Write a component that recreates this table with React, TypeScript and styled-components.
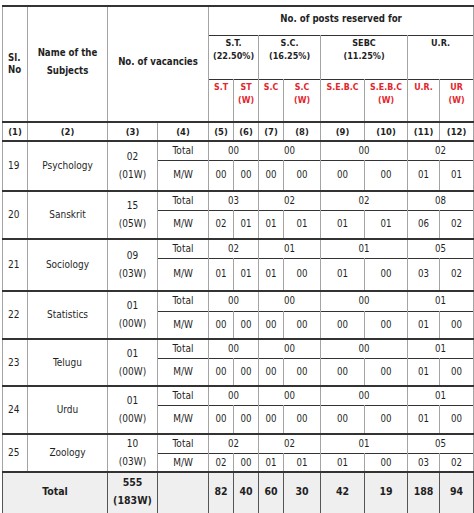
import React from 'react';
import styled, { createGlobalStyle } from 'styled-components';

const Global = createGlobalStyle`
  html, body { margin: 0; padding: 0; background: #ffffff; }
  body {
    font-family: "DejaVu Sans Condensed", "DejaVu Sans", "Liberation Sans", sans-serif;
    font-stretch: semi-condensed;
    color: #1f1f1f;
  }
`;

const DARK = '#333333';
const GRAY = '#a4a4a4';
const RED = '#e3262d';

type Top = 'thick' | 'thin' | 'none';

const topBorder = (t?: Top) =>
  t === 'thick' ? `2px solid ${DARK}` : t === 'none' ? 'none' : `1px solid ${DARK}`;

const Page = styled.div`
  box-sizing: border-box;
  width: 474px;
  height: 513px;
  overflow: hidden;
  padding: 5px 0 0 2px;
`;

const Table = styled.table`
  border-collapse: collapse;
  table-layout: fixed;
  width: 471px;
`;

const Col = styled.col<{ $w: number }>`
  width: ${(p) => p.$w}px;
`;

const Row = styled.tr<{ $h: number }>`
  height: ${(p) => p.$h}px;
`;

const BaseCell = styled.td<{ $top?: Top }>`
  padding: 0;
  border-left: 1px solid ${GRAY};
  border-right: 1px solid ${GRAY};
  border-top: ${(p) => topBorder(p.$top)};
  border-bottom: none;
  text-align: center;
  vertical-align: middle;
  white-space: nowrap;
  overflow: hidden;
`;

const HeadCell = styled(BaseCell).attrs({ as: 'th' })`
  font-weight: bold;
  font-size: 9.6px;
  line-height: 12px;
`;

const SlHead = styled(HeadCell)`
  text-align: left;
  padding-left: 5px;
`;

const NameHead = styled(HeadCell)`
  line-height: 18px;
  padding-bottom: 4px;
`;

const TitleHead = styled(HeadCell)`
  padding-bottom: 4px;
`;

const GroupHead = styled(HeadCell)`
  vertical-align: top;
  font-size: 9px;
  line-height: 13px;
  padding-top: 1px;
`;

const RedHead = styled(HeadCell)`
  vertical-align: top;
  color: ${RED};
  font-size: 8.8px;
  line-height: 13px;
  padding-top: 1px;
`;

const IndexHead = styled(HeadCell)`
  font-size: 9.4px;
`;

const DataCell = styled(BaseCell)`
  font-size: 10px;
  line-height: 12px;
`;

const SlCell = styled(DataCell)`
  text-align: left;
  padding-left: 5px;
`;

const VacCell = styled(DataCell)`
  line-height: 18px;
`;

const ValueCell = styled(DataCell)`
  font-size: 9.6px;
`;

const TotalCell = styled(BaseCell)`
  background: #efefef;
  font-weight: bold;
  font-size: 10.5px;
  line-height: 18px;
  vertical-align: top;
  padding-top: 9px;
  border-left-color: #555555;
  border-right-color: #555555;
`;

const TotalVacCell = styled(TotalCell)`
  padding-top: 0;
`;

interface Subject {
  sl: number;
  name: string;
  vac: string;
  women: string;
  totals: string[];
  mw: string[];
  h: [number, number];
}

const subjects: Subject[] = [
  { sl: 19, name: 'Psychology', vac: '02', women: '(01W)', totals: ['00', '00', '00', '02'], mw: ['00', '00', '00', '00', '00', '00', '01', '01'], h: [19, 31] },
  { sl: 20, name: 'Sanskrit', vac: '15', women: '(05W)', totals: ['03', '02', '02', '08'], mw: ['02', '01', '01', '01', '01', '01', '06', '02'], h: [19, 29] },
  { sl: 21, name: 'Sociology', vac: '09', women: '(03W)', totals: ['02', '01', '01', '05'], mw: ['01', '01', '01', '00', '01', '00', '03', '02'], h: [19, 33] },
  { sl: 22, name: 'Statistics', vac: '01', women: '(00W)', totals: ['00', '00', '00', '01'], mw: ['00', '00', '00', '00', '00', '00', '01', '00'], h: [20, 28] },
  { sl: 23, name: 'Telugu', vac: '01', women: '(00W)', totals: ['00', '00', '00', '01'], mw: ['00', '00', '00', '00', '00', '00', '01', '00'], h: [19, 28] },
  { sl: 24, name: 'Urdu', vac: '01', women: '(00W)', totals: ['00', '00', '00', '01'], mw: ['00', '00', '00', '00', '00', '00', '01', '00'], h: [19, 29] },
  { sl: 25, name: 'Zoology', vac: '10', women: '(03W)', totals: ['02', '02', '01', '05'], mw: ['02', '00', '01', '01', '01', '00', '03', '02'], h: [19, 18] },
];

const widths = [25, 80, 50, 51, 25, 25, 25, 37, 44, 43, 32, 34];

const groups = [
  ['S.T.', '(22.50%)'],
  ['S.C.', '(16.25%)'],
  ['SEBC', '(11.25%)'],
  ['U.R.'],
];

const redLabels = [
  ['S.T'],
  ['ST', '(W)'],
  ['S.C'],
  ['S.C', '(W)'],
  ['S.E.B.C'],
  ['S.E.B.C', '(W)'],
  ['U.R.'],
  ['UR', '(W)'],
];

const grandTotals = ['82', '40', '60', '30', '42', '19', '188', '94'];

const Lines: React.FC<{ lines: string[] }> = ({ lines }) => (
  <>
    {lines.map((l, i) => (
      <React.Fragment key={i}>
        {i > 0 && <br />}
        {l}
      </React.Fragment>
    ))}
  </>
);

export default function App() {
  return (
    <>
      <Global />
      <Page>
        <Table>
          <colgroup>
            {widths.map((w, i) => (
              <Col key={i} $w={w} />
            ))}
          </colgroup>
          <thead>
            <Row $h={29}>
              <SlHead rowSpan={3} $top="thick">
                Sl.
                <br />
                No
              </SlHead>
              <NameHead rowSpan={3} $top="thick">
                Name of the
                <br />
                Subjects
              </NameHead>
              <TitleHead rowSpan={3} colSpan={2} $top="thick">
                No. of vacancies
              </TitleHead>
              <TitleHead colSpan={8} $top="thick">
                No. of posts reserved for
              </TitleHead>
            </Row>
            <Row $h={44}>
              {groups.map((g, i) => (
                <GroupHead key={i} colSpan={2} $top="thin">
                  <Lines lines={g} />
                </GroupHead>
              ))}
            </Row>
            <Row $h={43}>
              {redLabels.map((l, i) => (
                <RedHead key={i} $top="thin">
                  <Lines lines={l} />
                </RedHead>
              ))}
            </Row>
            <Row $h={19}>
              {widths.map((_, i) => (
                <IndexHead key={i} $top="thick">
                  ({i + 1})
                </IndexHead>
              ))}
            </Row>
          </thead>
          <tbody>
            {subjects.map((s) => (
              <React.Fragment key={s.sl}>
                <Row $h={s.h[0]}>
                  <SlCell rowSpan={2} $top="thick">
                    {s.sl}
                  </SlCell>
                  <DataCell rowSpan={2} $top="thick">
                    {s.name}
                  </DataCell>
                  <VacCell rowSpan={2} $top="thick">
                    {s.vac}
                    <br />
                    {s.women}
                  </VacCell>
                  <DataCell $top="thick">Total</DataCell>
                  {s.totals.map((t, i) => (
                    <ValueCell key={i} colSpan={2} $top="thick">
                      {t}
                    </ValueCell>
                  ))}
                </Row>
                <Row $h={s.h[1]}>
                  <DataCell $top="thin">M/W</DataCell>
                  {s.mw.map((v, i) => (
                    <ValueCell key={i} $top="thin">
                      {v}
                    </ValueCell>
                  ))}
                </Row>
              </React.Fragment>
            ))}
            <Row $h={43}>
              <TotalCell colSpan={2} $top="thick">
                Total
              </TotalCell>
              <TotalVacCell $top="thick">
                555
                <br />
                (183W)
              </TotalVacCell>
              <TotalCell $top="thick" />
              {grandTotals.map((t, i) => (
                <TotalCell key={i} $top="thick">
                  {t}
                </TotalCell>
              ))}
            </Row>
          </tbody>
        </Table>
      </Page>
    </>
  );
}
